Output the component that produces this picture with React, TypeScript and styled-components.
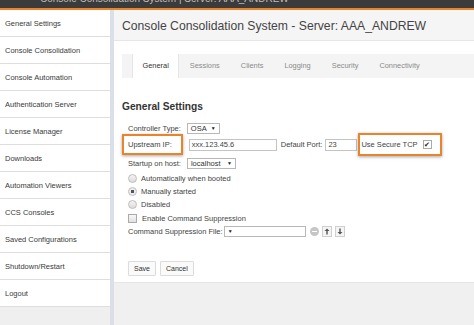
import React from "react";
import styled, { createGlobalStyle } from "styled-components";

const GlobalStyle = createGlobalStyle`
  html, body {
    margin: 0;
    padding: 0;
    background: #f0f0f0;
    font-family: "Liberation Sans", Arial, sans-serif;
    color: #333;
  }
`;

const Page = styled.div`
  width: 474px;
  height: 325px;
  overflow: hidden;
  display: flex;
  flex-direction: column;
`;

const TopBar = styled.div`
  height: 8px;
  background: #3b3b3b;
  border-bottom: 2px solid #e8842c;
  overflow: hidden;
  flex-shrink: 0;
`;

const TopTitle = styled.div`
  margin-top: -6px;
  padding-left: 40px;
  color: #bdbdbd;
  font-size: 10px;
  line-height: 10px;
  white-space: nowrap;
`;

const Body = styled.div`
  flex: 1;
  display: flex;
  min-height: 0;
`;

const Sidebar = styled.nav`
  width: 110px;
  background: #efefef;
  display: flex;
  flex-direction: column;
  flex-shrink: 0;
`;

const NavItem = styled.div`
  height: 26px;
  line-height: 27px;
  padding-left: 5px;
  background: #fff;
  border-bottom: 1px solid #dedede;
  font-size: 7.5px;
  color: #3a3a3a;
  white-space: nowrap;
`;

const Divider = styled.div`
  width: 4px;
  background: #d9e0e8;
  flex-shrink: 0;
`;

const Main = styled.div`
  flex: 1;
  display: flex;
  flex-direction: column;
  background: #f0f0f0;
`;

const Header = styled.header`
  height: 31px;
  background: #f5f5f5;
  border-bottom: 1px solid #e6e6e6;
  display: flex;
  align-items: center;
  padding-left: 8px;
  padding-top: 2px;
  box-sizing: border-box;
  font-size: 12.2px;
  color: #444;
  white-space: nowrap;
`;

const Content = styled.section`
  background: #fff;
  height: 242px;
  box-sizing: border-box;
  padding: 13px 0 0 8px;
  border-bottom: 1px solid #e6e6e6;
`;

const Tabs = styled.div`
  height: 24px;
  background: #f4f4f4;
  display: flex;
  padding-left: 10px;
`;

const Tab = styled.div<{ $active?: boolean }>`
  padding: 0 9.5px;
  line-height: 24px;
  font-size: 7.4px;
  color: ${(p) => (p.$active ? "#333" : "#8a8a8a")};
  background: ${(p) => (p.$active ? "#fff" : "transparent")};
  border-left: 1px solid ${(p) => (p.$active ? "#e6e6e6" : "transparent")};
  border-right: 1px solid ${(p) => (p.$active ? "#e6e6e6" : "transparent")};
  height: 24px;
`;

const Heading = styled.h2`
  margin: 23px 0 9px;
  font-size: 10.2px;
  font-weight: bold;
  color: #333;
`;

const Form = styled.div`
  padding-left: 6px;
  font-size: 7.5px;
  color: #444;
`;

const Row = styled.div<{ $h?: number }>`
  display: flex;
  align-items: center;
  height: ${(p) => p.$h ?? 13}px;
  white-space: nowrap;
`;

const Label = styled.span<{ $gap?: number }>`
  margin-right: ${(p) => p.$gap ?? 6}px;
`;

const Highlight = styled.span`
  display: inline-flex;
  align-items: center;
  height: 17px;
  padding: 0 3px 0 1px;
  border: 2px solid #e8842c;
  box-shadow: 0 1px 3px rgba(0, 0, 0, 0.35);
`;

const UpstreamBox = styled(Highlight)`
  margin-left: -6px;
  padding-left: 4px;
  padding-right: 9px;
`;

const SecureBox = styled(Highlight)`
  margin-left: 1px;
  height: 19px;
`;

const Select = styled.div<{ $w: number }>`
  width: ${(p) => p.$w}px;
  height: 11px;
  box-sizing: border-box;
  border: 1px solid #b8b8b8;
  display: flex;
  align-items: center;
  justify-content: space-between;
  padding: 0 3px;
  font-size: 7.5px;
  color: #333;
  background: #fff;
  &::after {
    content: "▼";
    font-size: 5px;
    color: #222;
  }
`;

const Input = styled.div<{ $w: number; $left?: number }>`
  width: ${(p) => p.$w}px;
  height: 12px;
  margin-left: ${(p) => p.$left ?? 0}px;
  box-sizing: border-box;
  border: 1px solid #c4c4c4;
  padding-left: 2px;
  line-height: 10px;
  font-size: 7.5px;
  color: #444;
  background: #fff;
`;

const Radio = styled.span<{ $on?: boolean }>`
  width: 7px;
  height: 7px;
  border-radius: 50%;
  border: 1px solid #bdbdbd;
  background: ${(p) =>
    p.$on
      ? "radial-gradient(circle, #555 0 1.5px, #eee 2px)"
      : "linear-gradient(#f4f4f4, #dcdcdc)"};
  margin-right: 4px;
`;

const Check = styled.span<{ $on?: boolean }>`
  width: 7px;
  height: 7px;
  border: 1px solid #aaa;
  background: ${(p) => (p.$on ? "#fff" : "linear-gradient(#f8f8f8, #e0e0e0)")};
  margin-right: 5px;
  display: inline-flex;
  align-items: center;
  justify-content: center;
  font-size: 7px;
  line-height: 7px;
  color: #222;
`;

const IconBtn = styled.span`
  width: 8px;
  height: 9px;
  border: 1px solid #cfcfcf;
  background: #f5f5f5;
  margin-left: 3px;
  display: inline-flex;
  align-items: center;
  justify-content: center;
`;

const MinusIcon = styled.span`
  width: 9px;
  height: 9px;
  border-radius: 50%;
  background: #c6c6c6;
  margin-left: 4px;
  display: inline-flex;
  align-items: center;
  justify-content: center;
  &::after {
    content: "";
    width: 5px;
    height: 1px;
    background: #fff;
  }
`;

const Buttons = styled.div`
  display: flex;
  gap: 4px;
  margin-top: 24px;
`;

const Button = styled.button`
  height: 15px;
  padding: 0 5px;
  font-family: inherit;
  font-size: 7px;
  color: #333;
  background: #fafafa;
  border: 1px solid #dcdcdc;
  border-radius: 1px;
`;

const Arrow = ({ up }: { up?: boolean }) => (
  <svg width="6" height="7" viewBox="0 0 6 7">
    <path
      d={up ? "M3 0.5 L0.5 3 H2.3 V6.5 H3.7 V3 H5.5 Z" : "M3 6.5 L0.5 4 H2.3 V0.5 H3.7 V4 H5.5 Z"}
      fill="#555"
    />
  </svg>
);

const navItems = [
  "General Settings",
  "Console Consolidation",
  "Console Automation",
  "Authentication Server",
  "License Manager",
  "Downloads",
  "Automation Viewers",
  "CCS Consoles",
  "Saved Configurations",
  "Shutdown/Restart",
  "Logout",
];

const tabs = ["General", "Sessions", "Clients", "Logging", "Security", "Connectivity"];

const App: React.FC = () => {
  return (
    <Page>
      <GlobalStyle />
      <TopBar>
        <TopTitle>Console Consolidation System | Server: AAA_ANDREW</TopTitle>
      </TopBar>
      <Body>
        <Sidebar>
          {navItems.map((item) => (
            <NavItem key={item}>{item}</NavItem>
          ))}
        </Sidebar>
        <Divider />
        <Main>
          <Header>Console Consolidation System - Server: AAA_ANDREW</Header>
          <Content>
            <Tabs>
              {tabs.map((t, i) => (
                <Tab key={t} $active={i === 0}>
                  {t}
                </Tab>
              ))}
            </Tabs>
            <Heading>General Settings</Heading>
            <Form>
              <Row $h={14}>
                <Label>Controller Type:</Label>
                <Select $w={33}>OSA</Select>
              </Row>
              <Row $h={19}>
                <UpstreamBox>Upstream IP:</UpstreamBox>
                <Input $w={88} $left={6}>xxx.123.45.6</Input>
                <Label style={{ marginLeft: 4 }} $gap={3}>
                  Default Port:
                </Label>
                <Input $w={32}>23</Input>
                <SecureBox>
                  <Label $gap={5}>Use Secure TCP</Label>
                  <Check $on>✔</Check>
                </SecureBox>
              </Row>
              <Row $h={18}>
                <Label>Startup on host:</Label>
                <Select $w={49}>localhost</Select>
              </Row>
              <Row $h={13}>
                <Radio />
                Automatically when booted
              </Row>
              <Row $h={13}>
                <Radio $on />
                Manually started
              </Row>
              <Row $h={13}>
                <Radio />
                Disabled
              </Row>
              <Row $h={14}>
                <Check />
                Enable Command Suppression
              </Row>
              <Row $h={12}>
                <Label $gap={1}>Command Suppression File:</Label>
                <Select $w={82} />
                <MinusIcon />
                <IconBtn>
                  <Arrow up />
                </IconBtn>
                <IconBtn>
                  <Arrow />
                </IconBtn>
              </Row>
              <Buttons>
                <Button>Save</Button>
                <Button>Cancel</Button>
              </Buttons>
            </Form>
          </Content>
        </Main>
      </Body>
    </Page>
  );
};

export default App;
